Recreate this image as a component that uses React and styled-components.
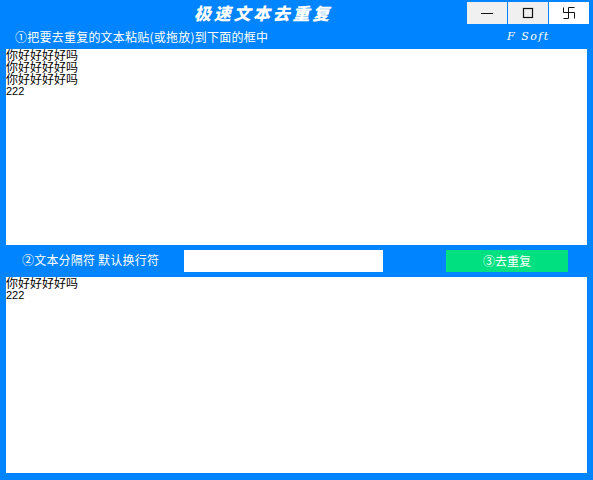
import React from 'react';
import styled, { createGlobalStyle } from 'styled-components';

const GlobalStyle = createGlobalStyle`
  html, body {
    margin: 0;
    padding: 0;
    background: #0084ff;
  }
`;

const UI_FONT = `"Noto Sans CJK SC", "Liberation Sans", sans-serif`;

const App = () => (
  <Window>
    <GlobalStyle />
    <TitleBar>
      <Title>极速文本去重复</Title>
      <WindowButtons>
        <WindowButton aria-label="minimize">
          <svg width="14" height="14" viewBox="0 0 14 14">
            <path d="M1 7.5H13" stroke="#111" strokeWidth="1" />
          </svg>
        </WindowButton>
        <WindowButton aria-label="maximize">
          <svg width="12" height="12" viewBox="0 0 12 12">
            <rect x="1.5" y="1.5" width="9" height="9" fill="none" stroke="#111" strokeWidth="1.2" />
          </svg>
        </WindowButton>
        <WindowButton $active aria-label="pin">
          <svg width="12" height="12" viewBox="0 0 12 12">
            <path
              d="M0.5 0.5V5.5H11.5V11.5M5.5 0.5V11.5H0.5M5.5 0.5H11.5"
              fill="none"
              stroke="#111"
            />
          </svg>
        </WindowButton>
      </WindowButtons>
    </TitleBar>
    <HintRow>
      <Hint>①把要去重复的文本粘贴(或拖放)到下面的框中</Hint>
      <Brand>F Soft</Brand>
    </HintRow>
    <TextPane>
      <CjkLine>你好好好好吗</CjkLine>
      <CjkLine>你好好好好吗</CjkLine>
      <CjkLine>你好好好好吗</CjkLine>
      <NumLine>222</NumLine>
    </TextPane>
    <ControlRow>
      <SeparatorLabel>②文本分隔符 默认换行符</SeparatorLabel>
      <SeparatorInput />
      <DedupeButton>③去重复</DedupeButton>
    </ControlRow>
    <TextPane>
      <CjkLine>你好好好好吗</CjkLine>
      <NumLine>222</NumLine>
    </TextPane>
  </Window>
);

export default App;

const Window = styled.div`
  width: 593px;
  height: 480px;
  background: #0084ff;
  overflow: hidden;
  font-family: ${UI_FONT};
  display: flex;
  flex-direction: column;
`;

const TitleBar = styled.div`
  height: 28px;
  display: flex;
  align-items: flex-start;
  padding: 2px 4px 0 194px;
  box-sizing: border-box;
`;

const Title = styled.h1`
  margin: -2px auto 0 0;
  font-family: "Noto Sans CJK SC", sans-serif;
  font-size: 17px;
  line-height: 26px;
  font-weight: 900;
  font-style: italic;
  letter-spacing: 2.7px;
  color: #fff;
  white-space: nowrap;
`;

const WindowButtons = styled.div`
  display: flex;
  gap: 1px;
  height: 22px;
`;

const WindowButton = styled.div`
  width: 40px;
  height: 22px;
  display: flex;
  align-items: center;
  justify-content: center;
  background: ${p => (p.$active ? '#fff' : '#f0f0f0')};
`;

const HintRow = styled.div`
  height: 21px;
  display: flex;
  align-items: center;
  padding: 0 0 3px 15px;
  box-sizing: border-box;
  color: #fff;
`;

const Hint = styled.span`
  font-size: 12px;
  line-height: 16px;
  letter-spacing: 0.23px;
  width: 492px;
  white-space: nowrap;
`;

const Brand = styled.span`
  font-family: "DejaVu Serif", "Liberation Serif", serif;
  font-style: italic;
  font-size: 11px;
  line-height: 16px;
  letter-spacing: 1.5px;
  white-space: nowrap;
`;

const TextPane = styled.div`
  margin: 0 6px;
  width: 581px;
  height: 196px;
  background: #fff;
  color: #000;
  overflow: hidden;
`;

const CjkLine = styled.div`
  font-size: 12px;
  line-height: 12px;
  white-space: nowrap;
`;

const NumLine = styled.div`
  font-family: "Liberation Sans", sans-serif;
  font-size: 11px;
  line-height: 12px;
`;

const ControlRow = styled.div`
  height: 32px;
  display: flex;
  align-items: center;
  color: #fff;
`;

const SeparatorLabel = styled.span`
  font-size: 12px;
  line-height: 16px;
  letter-spacing: 0.2px;
  margin: -2px 0 0 22px;
  width: 162px;
  white-space: nowrap;
`;

const SeparatorInput = styled.div`
  width: 199px;
  height: 22px;
  background: #fff;
`;

const DedupeButton = styled.div`
  margin-left: 63px;
  width: 122px;
  height: 22px;
  background: #00e080;
  display: flex;
  align-items: center;
  justify-content: center;
  font-size: 12px;
  line-height: 16px;
  color: #fff;
`;
